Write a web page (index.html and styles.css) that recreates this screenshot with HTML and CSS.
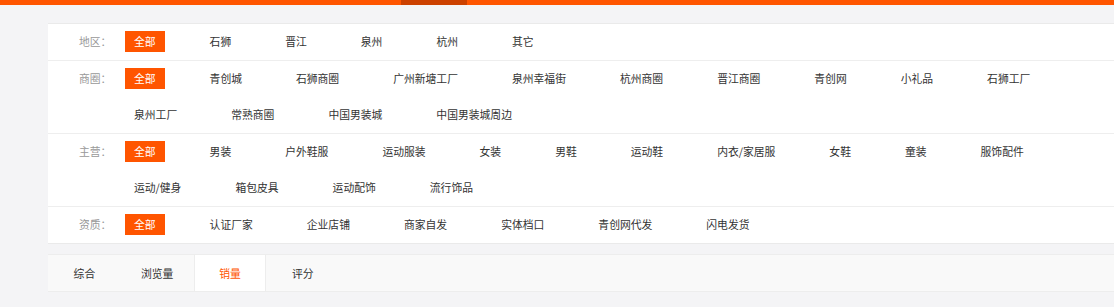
FILE: index.html
```html
<!DOCTYPE html>
<html lang="zh-CN">
<head>
<meta charset="utf-8">
<title>筛选</title>
<link rel="stylesheet" href="styles.css">
</head>
<body>
<div class="topbar"><span class="topbar-active"></span></div>
<div class="wrap">
  <div class="filter">
    <div class="frow">
      <span class="flabel">地区：</span>
      <ul class="fitems">
        <li class="on">全部</li><li>石狮</li><li>晋江</li><li>泉州</li><li>杭州</li><li>其它</li>
      </ul>
    </div>
    <div class="frow">
      <span class="flabel">商圈：</span>
      <ul class="fitems">
        <li class="on">全部</li><li>青创城</li><li>石狮商圈</li><li>广州新塘工厂</li><li>泉州幸福街</li><li>杭州商圈</li><li>晋江商圈</li><li>青创网</li><li>小礼品</li><li>石狮工厂</li><li>泉州工厂</li><li>常熟商圈</li><li>中国男装城</li><li>中国男装城周边</li>
      </ul>
    </div>
    <div class="frow">
      <span class="flabel">主营：</span>
      <ul class="fitems">
        <li class="on">全部</li><li>男装</li><li>户外鞋服</li><li>运动服装</li><li>女装</li><li>男鞋</li><li>运动鞋</li><li>内衣/家居服</li><li>女鞋</li><li>童装</li><li>服饰配件</li><li>运动/健身</li><li>箱包皮具</li><li>运动配饰</li><li>流行饰品</li>
      </ul>
    </div>
    <div class="frow">
      <span class="flabel">资质：</span>
      <ul class="fitems">
        <li class="on">全部</li><li>认证厂家</li><li>企业店铺</li><li>商家自发</li><li>实体档口</li><li>青创网代发</li><li>闪电发货</li>
      </ul>
    </div>
  </div>
  <div class="tabs">
    <span class="tab">综合</span>
    <span class="tab">浏览量</span>
    <span class="tab on">销量</span>
    <span class="tab">评分</span>
  </div>
</div>
</body>
</html>
```

FILE: styles.css
```css
* {
  margin: 0;
  padding: 0;
  box-sizing: border-box;
}

body {
  background: #f4f4f6;
  font-family: "Noto Sans CJK SC", "Noto Sans", sans-serif;
  font-size: 10.8px;
  color: #333;
  overflow: hidden;
}

.topbar {
  height: 5px;
  background: #ff5500;
  display: flex;
}

.topbar-active {
  margin-left: 401px;
  width: 66px;
  background: #cc4100;
}

.wrap {
  margin: 18px 0 0 48px;
}

.filter {
  background: #fff;
  border-top: 1px solid #eaeaea;
  border-bottom: 1px solid #eaeaea;
}

.frow {
  display: flex;
  border-bottom: 1px solid #eeeeee;
}

.frow:last-child {
  border-bottom: 0;
}

.flabel {
  flex: none;
  width: 77px;
  padding-left: 31px;
  color: #999;
  line-height: 21px;
  margin: 7px 0 8px;
  white-space: nowrap;
}

.fitems {
  list-style: none;
  display: flex;
  flex-wrap: wrap;
  column-gap: 36px;
  flex: 1;
  min-width: 0;
}

.fitems li {
  padding: 0 9px;
  line-height: 21px;
  height: 21px;
  margin: 7px 0 8px;
  white-space: nowrap;
}

.fitems li.on {
  background: #ff5500;
  color: #fff;
}

.tabs {
  margin-top: 10px;
  display: flex;
  height: 38px;
  background: #f9f9f9;
  border-top: 1px solid #ededed;
  border-bottom: 1px solid #ededed;
}

.tab {
  width: 72.8px;
  text-align: center;
  line-height: 36px;
}

.tab.on {
  background: #fff;
  color: #ff5500;
  border-left: 1px solid #ededed;
  border-right: 1px solid #ededed;
}
```
